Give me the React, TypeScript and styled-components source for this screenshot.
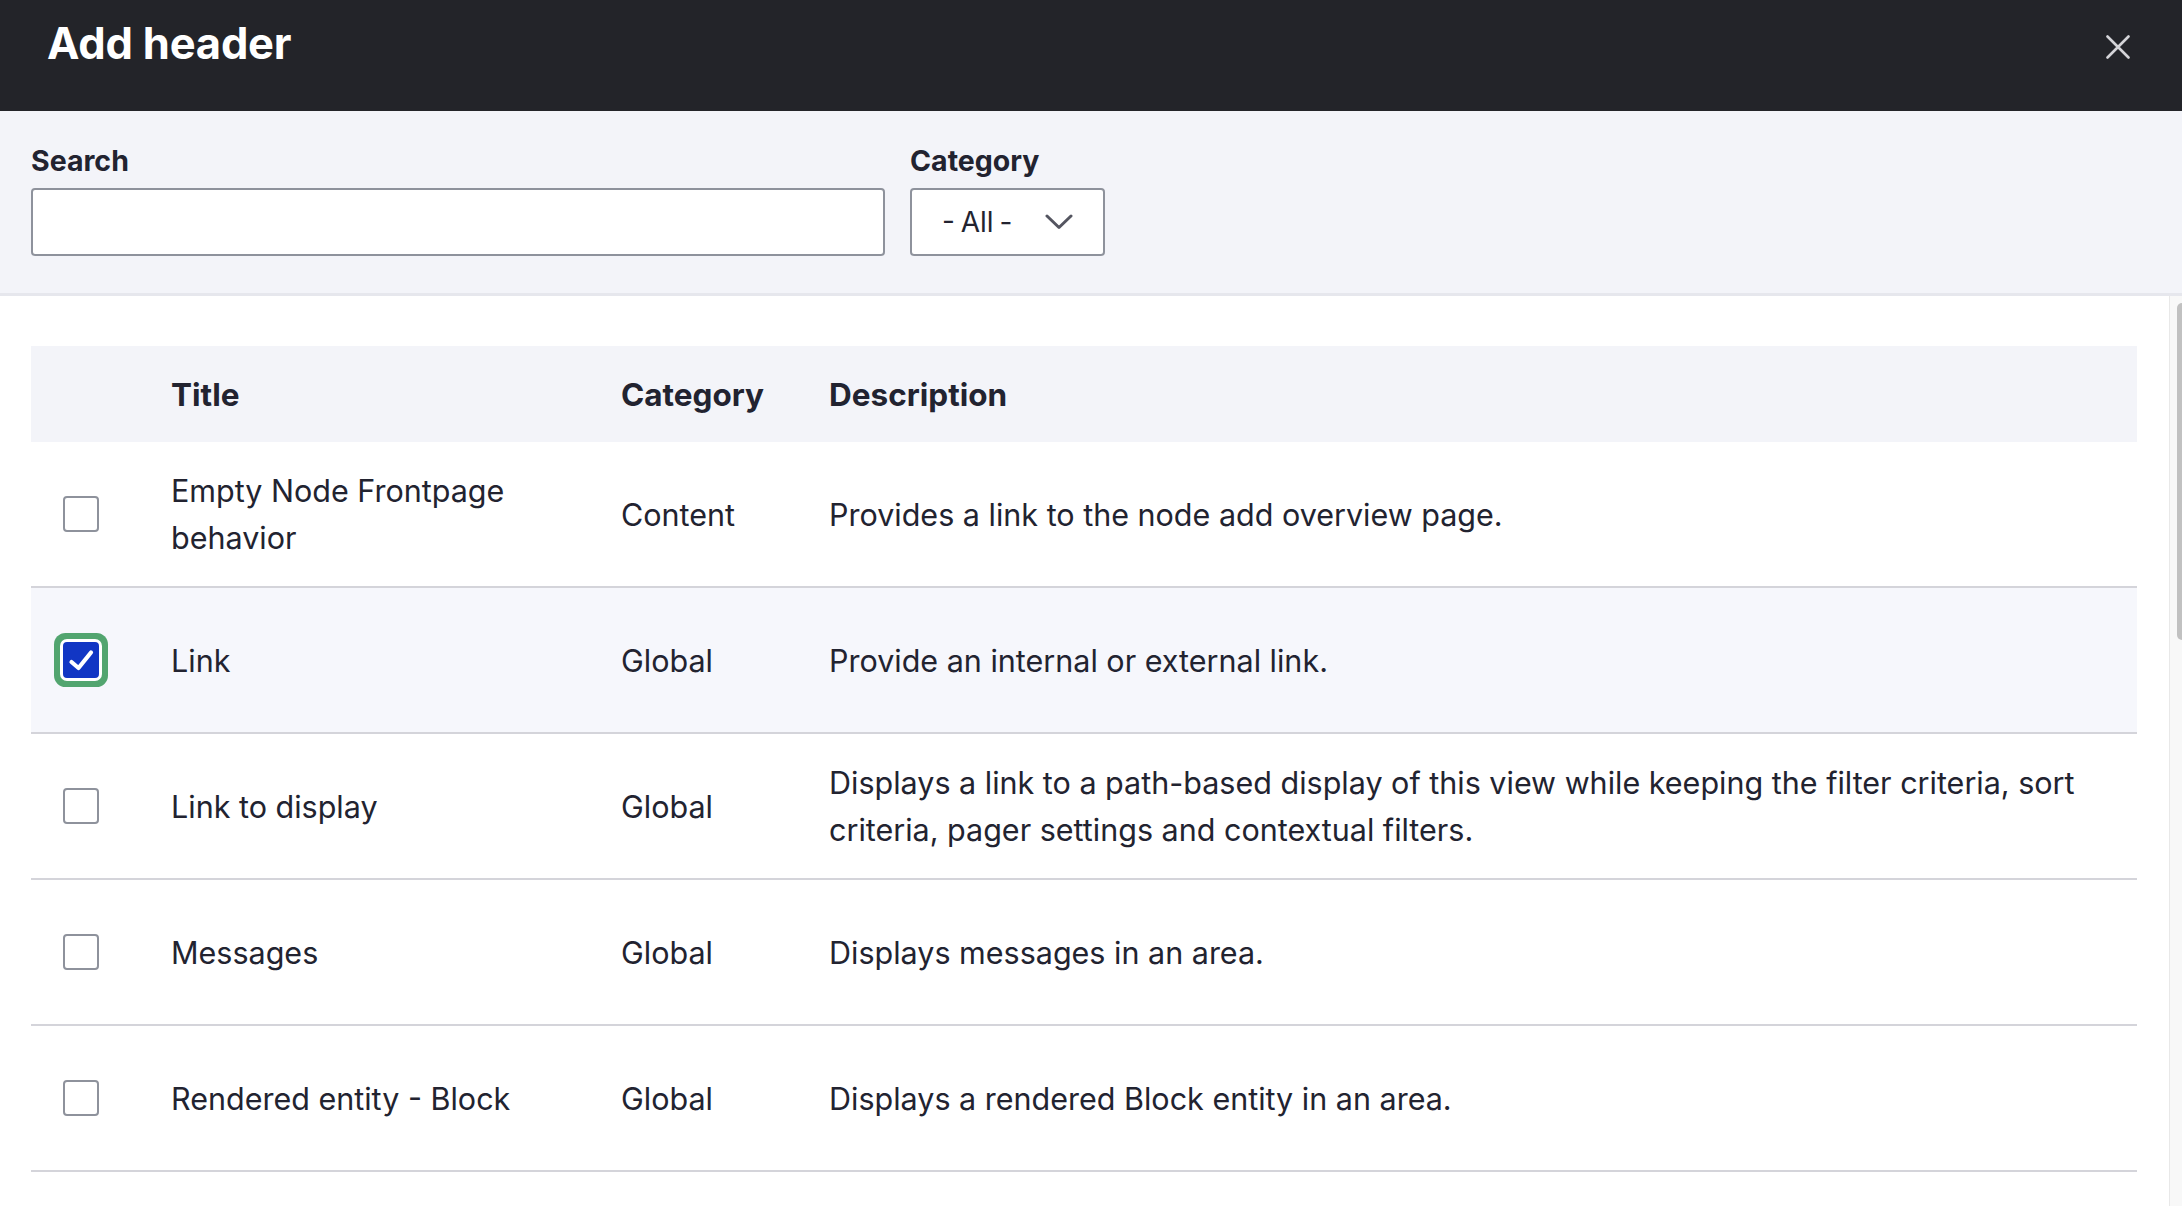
import * as React from 'react';
import styled, { createGlobalStyle } from 'styled-components';

const GlobalStyle = createGlobalStyle`
  html, body {
    margin: 0;
    padding: 0;
    background: #fff;
  }
  body {
    font-family: Inter, "Noto Sans", "Liberation Sans", sans-serif;
    color: #222330;
  }
  * { box-sizing: border-box; }
`;

const Dialog = styled.div`
  height: 1206px;
  display: flex;
  flex-direction: column;
  overflow: hidden;
`;

const TitleBar = styled.header`
  height: 111px;
  flex: none;
  background: #232429;
  display: flex;
  align-items: flex-start;
  justify-content: space-between;
  padding: 16px 52px 0 47px;
`;

const Title = styled.h1`
  margin: 0;
  font-size: 43.5px;
  line-height: 54px;
  font-weight: 700;
  color: #fff;
  letter-spacing: -0.2px;
`;

const CloseButton = styled.button`
  margin-top: 19px;
  width: 24px;
  height: 24px;
  padding: 0;
  border: 0;
  background: none;
  color: #d4d4d8;
  display: flex;
`;

const FilterBar = styled.div`
  height: 185px;
  flex: none;
  background: #f3f4f9;
  border-bottom: 3px solid #e6e7ed;
  display: flex;
  align-items: flex-start;
  gap: 25px;
  padding: 32px 31px 0;
`;

const Field = styled.div<{ $width: number }>`
  width: ${p => p.$width}px;
  display: flex;
  flex-direction: column;
`;

const Label = styled.label`
  font-size: 28.5px;
  line-height: 36px;
  font-weight: 700;
  margin-bottom: 9px;
`;

const TextInput = styled.input`
  height: 68px;
  border: 2px solid #8e929c;
  border-radius: 4px;
  background: #fff;
  font: inherit;
  font-size: 28px;
  padding: 0 20px;
`;

const SelectBox = styled.div`
  height: 68px;
  border: 2px solid #8e929c;
  border-radius: 4px;
  background: #fff;
  display: flex;
  align-items: center;
  justify-content: space-between;
  padding: 0 30px 0 30px;
  font-size: 28px;
  word-spacing: -2px;
  color: #222330;
`;

const Body = styled.div`
  flex: 1;
  display: flex;
  min-height: 0;
`;

const Scroller = styled.div`
  flex: 1;
  padding: 50px 32px 0 31px;
  overflow: hidden;
`;

const Track = styled.div`
  width: 13px;
  flex: none;
  background: #f8f8f8;
  border-left: 1px solid #e8e8e8;
  padding: 7px 0 0 7px;
`;

const Thumb = styled.div`
  height: 337px;
  background: #c1c1c1;
  border-radius: 6px 0 0 6px;
`;

const Grid = styled.div`
  display: grid;
  grid-template-columns: 140px 450px 208px 1fr;
`;

const HeadRow = styled.div`
  display: contents;
`;

const HeadCell = styled.div`
  height: 96px;
  background: #f3f4f9;
  display: flex;
  align-items: center;
  font-size: 31.5px;
  font-weight: 700;
`;

const Row = styled.div`
  display: contents;
`;

const Cell = styled.div<{ $selected: boolean; $check?: boolean }>`
  min-height: 146px;
  background: ${p => (p.$selected ? '#f6f7fc' : '#fff')};
  border-bottom: 2px solid #d4d4da;
  display: flex;
  align-items: center;
  font-size: 30.5px;
  line-height: 47px;
  padding: 0 ${p => (p.$check ? '0' : '30px')} 0 ${p => (p.$check ? '32px' : '0')};
`;

const Box = styled.span<{ $checked: boolean }>`
  width: 36px;
  height: 36px;
  border-radius: 4px;
  display: flex;
  border: 2px solid ${p => (p.$checked ? '#1136c4' : '#8e929c')};
  background: ${p => (p.$checked ? '#1136c4' : '#fff')};
  box-shadow: ${p => (p.$checked ? '0 0 0 3px #fff, 0 0 0 9px #52a56f' : 'none')};
`;

const rows = [
  { title: 'Empty Node Frontpage behavior', category: 'Content', description: 'Provides a link to the node add overview page.', checked: false },
  { title: 'Link', category: 'Global', description: 'Provide an internal or external link.', checked: true },
  { title: 'Link to display', category: 'Global', description: 'Displays a link to a path-based display of this view while keeping the filter criteria, sort criteria, pager settings and contextual filters.', checked: false },
  { title: 'Messages', category: 'Global', description: 'Displays messages in an area.', checked: false },
  { title: 'Rendered entity - Block', category: 'Global', description: 'Displays a rendered Block entity in an area.', checked: false },
];

const Checkbox: React.FC<{ checked: boolean }> = ({ checked }) => (
  <Box $checked={checked}>
    {checked && (
      <svg width="32" height="32" viewBox="2 2 32 32" fill="none">
        <path d="M8.5 20 L15.5 26 L28 10.5" stroke="#fff" strokeWidth="4.2" strokeLinecap="round" strokeLinejoin="round" />
      </svg>
    )}
  </Box>
);

export default function App() {
  return (
    <Dialog>
      <GlobalStyle />
      <TitleBar>
        <Title>Add header</Title>
        <CloseButton aria-label="Close">
          <svg width="24" height="24" viewBox="0 0 24 24" fill="none">
            <path d="M1.5 1.5 L22.5 22.5 M22.5 1.5 L1.5 22.5" stroke="currentColor" strokeWidth="2.6" strokeLinecap="round" />
          </svg>
        </CloseButton>
      </TitleBar>
      <FilterBar>
        <Field $width={854}>
          <Label>Search</Label>
          <TextInput type="text" />
        </Field>
        <Field $width={195}>
          <Label>Category</Label>
          <SelectBox>
            <span>- All -</span>
            <svg width="28" height="16" viewBox="0 0 28 16" fill="none">
              <path d="M2 2 L14 13.5 L26 2" stroke="#545560" strokeWidth="3" strokeLinecap="round" strokeLinejoin="round" />
            </svg>
          </SelectBox>
        </Field>
      </FilterBar>
      <Body>
        <Scroller>
          <Grid>
            <HeadRow>
              <HeadCell />
              <HeadCell>Title</HeadCell>
              <HeadCell>Category</HeadCell>
              <HeadCell>Description</HeadCell>
            </HeadRow>
            {rows.map(r => (
              <Row key={r.title}>
                <Cell $selected={r.checked} $check>
                  <Checkbox checked={r.checked} />
                </Cell>
                <Cell $selected={r.checked}>{r.title}</Cell>
                <Cell $selected={r.checked}>{r.category}</Cell>
                <Cell $selected={r.checked}>{r.description}</Cell>
              </Row>
            ))}
          </Grid>
        </Scroller>
        <Track>
          <Thumb />
        </Track>
      </Body>
    </Dialog>
  );
}
